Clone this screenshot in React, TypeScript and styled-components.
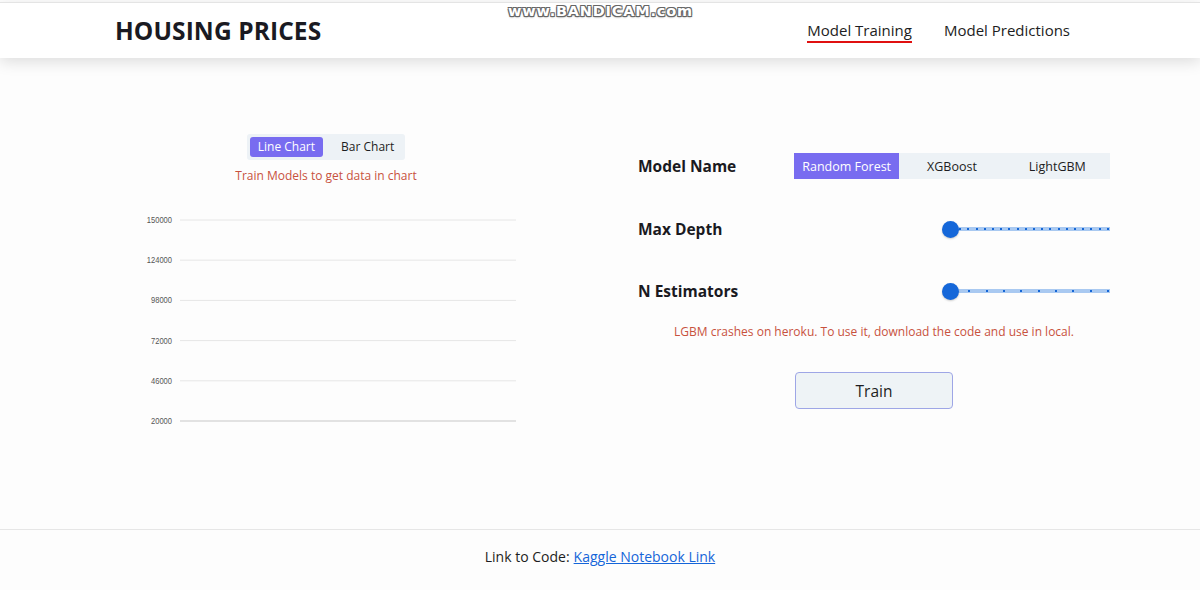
import styled, { createGlobalStyle } from "styled-components";
import { useState } from "react";

const GlobalStyle = createGlobalStyle`
  html, body {
    margin: 0;
    padding: 0;
    background: #fdfdfd;
    font-family: "Open Sans", "Noto Sans", sans-serif;
    color: #1b1b1f;
  }
  * {
    box-sizing: border-box;
  }
`;

const Page = styled.div`
  position: relative;
  width: 1200px;
  height: 590px;
  display: flex;
  flex-direction: column;
  padding-top: 2px;
  overflow: hidden;
`;

const Watermark = styled.div`
  position: absolute;
  z-index: 10;
  top: 3px;
  left: 508px;
  font-family: "DejaVu Sans", sans-serif;
  font-weight: 700;
  font-size: 14.5px;
  letter-spacing: 0.8px;
  color: #fff;
  text-shadow: -1px -1px 0 #666, 1px -1px 0 #666, -1px 1px 0 #666,
    1px 1px 0 #666, 0 1px 2px #444;
`;

const Header = styled.header`
  height: 56px;
  border-top: 1px solid #e4e4e4;
  background: #fff;
  display: flex;
  align-items: center;
  justify-content: space-between;
  padding: 0 130px 0 115px;
  box-shadow: 0 4px 14px rgba(0, 0, 0, 0.13);
  position: relative;
  z-index: 1;
`;

const Title = styled.div`
  font-size: 24.5px;
  font-weight: 700;
  letter-spacing: 0.1px;
  color: #1a1a22;
`;

const Nav = styled.nav`
  display: flex;
  gap: 32px;
  padding-top: 2px;
`;

const NavItem = styled.div<{ active?: boolean }>`
  font-size: 15px;
  color: #1d1d22;
  padding-bottom: 1px;
  border-bottom: 2px solid ${({ active }) => (active ? "#e01010" : "transparent")};
`;

const Main = styled.main`
  flex: 1;
  display: grid;
  grid-template-columns: 520px 1fr;
`;

const LeftCol = styled.div`
  display: flex;
  flex-direction: column;
  align-items: center;
  padding: 76px 0 0 132px;
`;

const Toggle = styled.div`
  display: flex;
  gap: 10px;
  padding: 3px;
  background: #edf2f6;
  border-radius: 3px;
`;

const ToggleBtn = styled.div<{ active?: boolean }>`
  font-size: 12px;
  padding: 1px 8px 2px;
  border-radius: 3px;
  color: ${({ active }) => (active ? "#fff" : "#1d1d22")};
  background: ${({ active }) => (active ? "#786cf0" : "transparent")};
`;

const Warn = styled.div<{ gap: number }>`
  margin-top: ${({ gap }) => gap}px;
  font-size: 12px;
  color: #c8523d;
`;

const ChartBox = styled.svg`
  margin-top: 26px;
  margin-left: -2px;
`;

const RightCol = styled.div`
  display: flex;
  flex-direction: column;
  padding: 82px 90px 0 118px;
`;

const Row = styled.div<{ h: number }>`
  height: ${({ h }) => h}px;
  display: flex;
  align-items: center;
  justify-content: space-between;
`;

const Label = styled.div`
  font-size: 15.5px;
  font-weight: 700;
  color: #1a1a1f;
`;

const Segment = styled.div`
  display: flex;
  width: 316px;
  height: 26px;
  background: #edf2f6;
`;

const SegBtn = styled.div<{ active?: boolean }>`
  flex: 1;
  display: flex;
  align-items: center;
  justify-content: center;
  font-size: 12.5px;
  color: ${({ active }) => (active ? "#fff" : "#1d1d22")};
  background: ${({ active }) => (active ? "#786cf0" : "transparent")};
`;

const Slider = styled.div`
  position: relative;
  width: 168px;
  height: 20px;
  display: flex;
  align-items: center;
`;

const Track = styled.div`
  width: 100%;
  height: 4px;
  margin-left: 8px;
  background: #a9c9f1;
  display: flex;
  justify-content: space-between;
  align-items: center;
  padding: 0 1px;
`;

const Dot = styled.span`
  width: 2px;
  height: 2px;
  background: #1667d6;
`;

const Thumb = styled.div`
  position: absolute;
  left: 0;
  top: 2px;
  width: 17px;
  height: 17px;
  border-radius: 50%;
  background: #1567d9;
  box-shadow: 0 1px 2px rgba(0, 0, 0, 0.2);
`;

const Center = styled.div`
  display: flex;
  flex-direction: column;
  align-items: center;
`;

const TrainBtn = styled.button`
  margin-top: 32px;
  width: 158px;
  height: 37px;
  border: 1px solid #9ea6e6;
  border-radius: 4px;
  background: #eef3f6;
  font-family: inherit;
  font-size: 15.5px;
  color: #1d1d22;
`;

const Footer = styled.footer`
  height: 61px;
  border-top: 1px solid #e6e6e6;
  display: flex;
  align-items: center;
  justify-content: center;
  font-size: 14px;
  color: #1d1d22;
  padding-bottom: 8px;
  gap: 4px;
  a {
    color: #1565d9;
    text-decoration: underline;
  }
`;

const ticks = [150000, 124000, 98000, 72000, 46000, 20000];

function EmptyChart() {
  return (
    <ChartBox width={390} height={220}>
      {ticks.map((t, i) => {
        const y = 10 + i * 40.2;
        return (
          <g key={t}>
            <text
              x={42}
              y={y + 3}
              textAnchor="end"
              fontFamily="Liberation Sans, Arial, sans-serif"
              fontSize={9.5}
              fill="#555"
              textLength={String(t).length * 4.2}
              lengthAdjust="spacingAndGlyphs"
            >
              {t}
            </text>
            <line
              x1={50}
              x2={386}
              y1={y}
              y2={y}
              stroke={i === ticks.length - 1 ? "#d9d9d9" : "#e6e6e6"}
              strokeWidth={i === ticks.length - 1 ? 1.5 : 1}
            />
          </g>
        );
      })}
    </ChartBox>
  );
}

function MarkSlider({ marks }: { marks: number }) {
  return (
    <Slider>
      <Track>
        {Array.from({ length: marks }).map((_, i) => (
          <Dot key={i} />
        ))}
      </Track>
      <Thumb />
    </Slider>
  );
}

export default function App() {
  const [chart, setChart] = useState("line");
  const [model, setModel] = useState("rf");
  return (
    <Page>
      <GlobalStyle />
      <Header>
        <Title>HOUSING PRICES</Title>
        <Nav>
          <NavItem active>Model Training</NavItem>
          <NavItem>Model Predictions</NavItem>
        </Nav>
      </Header>
      <Main>
        <LeftCol>
          <Toggle>
            <ToggleBtn active={chart === "line"} onClick={() => setChart("line")}>
              Line Chart
            </ToggleBtn>
            <ToggleBtn active={chart === "bar"} onClick={() => setChart("bar")}>
              Bar Chart
            </ToggleBtn>
          </Toggle>
          <Warn gap={7}>Train Models to get data in chart</Warn>
          <EmptyChart />
        </LeftCol>
        <RightCol>
          <Row h={52}>
            <Label>Model Name</Label>
            <Segment>
              <SegBtn active={model === "rf"} onClick={() => setModel("rf")}>
                Random Forest
              </SegBtn>
              <SegBtn active={model === "xgb"} onClick={() => setModel("xgb")}>
                XGBoost
              </SegBtn>
              <SegBtn active={model === "lgbm"} onClick={() => setModel("lgbm")}>
                LightGBM
              </SegBtn>
            </Segment>
          </Row>
          <Row h={74}>
            <Label>Max Depth</Label>
            <MarkSlider marks={20} />
          </Row>
          <Row h={50}>
            <Label>N Estimators</Label>
            <MarkSlider marks={10} />
          </Row>
          <Center>
            <Warn gap={7}>
              LGBM crashes on heroku. To use it, download the code and use in local.
            </Warn>
            <TrainBtn>Train</TrainBtn>
          </Center>
        </RightCol>
      </Main>
      <Footer>
        Link to Code: <a href="#">Kaggle Notebook Link</a>
      </Footer>
      <Watermark>www.BANDICAM.com</Watermark>
    </Page>
  );
}
